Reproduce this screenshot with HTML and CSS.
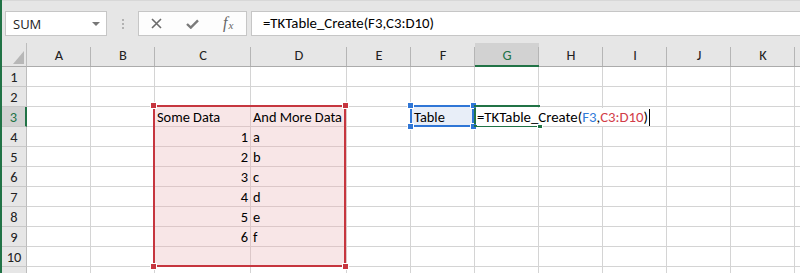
FILE: index.html
```html
<!DOCTYPE html>
<html lang="en">
<head>
    <meta charset="UTF-8">
    <title>TKTable_Create</title>
    <link rel="stylesheet" href="styles.css">
</head>
<body>
    <div class="app">
        <div class="formula-bar">
            <div class="name-box">
                <span>SUM</span>
                <span class="caret"></span>
            </div>
            <div class="grip"><i></i><i></i><i></i></div>
            <div class="fx-buttons">
                <span class="slot">
                    <svg width="11" height="11" viewBox="0 0 11 11"><path d="M1 1 L10 10 M10 1 L1 10" stroke="#6b6b6b" stroke-width="1.6" fill="none"/></svg>
                </span>
                <span class="slot">
                    <svg width="13" height="10" viewBox="0 0 13 10"><path d="M1 5 L4.8 8.6 L12 1.4" stroke="#7a7a7a" stroke-width="2.4" fill="none"/></svg>
                </span>
                <span class="slot fx">f<span>x</span></span>
            </div>
            <div class="formula-input">=TKTable_Create(F3,C3:D10)</div>
        </div>

        <div class="sheet">
            <div class="grid">
                <div class="corner">
                    <svg width="11" height="13" viewBox="0 0 11 13"><polygon points="11,0 11,13 0,13" fill="#b7b7b7"/></svg>
                </div>
                <div class="col">A</div><div class="col">B</div><div class="col">C</div><div class="col">D</div><div class="col">E</div><div class="col">F</div><div class="col sel">G</div><div class="col">H</div><div class="col">I</div><div class="col">J</div><div class="col">K</div><div class="col"></div>

                <div class="row">1</div><div></div><div></div><div></div><div></div><div></div><div></div><div></div><div></div><div></div><div></div><div></div><div></div>
                <div class="row">2</div><div></div><div></div><div></div><div></div><div></div><div></div><div></div><div></div><div></div><div></div><div></div><div></div>
                <div class="row sel">3</div><div></div><div></div><div class="pk">Some Data</div><div class="pk">And More Data</div><div></div><div class="bl">Table</div><div></div><div></div><div></div><div></div><div></div><div></div>
                <div class="row">4</div><div></div><div></div><div class="pk num">1</div><div class="pk">a</div><div></div><div></div><div></div><div></div><div></div><div></div><div></div><div></div>
                <div class="row">5</div><div></div><div></div><div class="pk num">2</div><div class="pk">b</div><div></div><div></div><div></div><div></div><div></div><div></div><div></div><div></div>
                <div class="row">6</div><div></div><div></div><div class="pk num">3</div><div class="pk">c</div><div></div><div></div><div></div><div></div><div></div><div></div><div></div><div></div>
                <div class="row">7</div><div></div><div></div><div class="pk num">4</div><div class="pk">d</div><div></div><div></div><div></div><div></div><div></div><div></div><div></div><div></div>
                <div class="row">8</div><div></div><div></div><div class="pk num">5</div><div class="pk">e</div><div></div><div></div><div></div><div></div><div></div><div></div><div></div><div></div>
                <div class="row">9</div><div></div><div></div><div class="pk num">6</div><div class="pk">f</div><div></div><div></div><div></div><div></div><div></div><div></div><div></div><div></div>
                <div class="row">10</div><div></div><div></div><div class="pk"></div><div class="pk"></div><div></div><div></div><div></div><div></div><div></div><div></div><div></div><div></div>
                <div class="row"></div><div></div><div></div><div></div><div></div><div></div><div></div><div></div><div></div><div></div><div></div><div></div><div></div>
            </div>

            <!-- reference highlights drawn over the cells -->
            <div class="ref ref-red"><i class="tl"></i><i class="tr"></i><i class="bl"></i><i class="br"></i></div>
            <div class="ref ref-blue"><i class="tl"></i><i class="tr"></i><i class="bl"></i><i class="br"></i></div>

            <div class="editor">
                <span class="edit-text">=TKTable_Create(<span class="t-blue">F3</span>,<span class="t-red">C3:D10</span>)<span class="cursor"></span></span>
                <i class="handle"></i>
            </div>
        </div>
    </div>
</body>
</html>
```

FILE: styles.css
```css
:root {
    --chrome: #e6e6e6;
    --chrome-line: #c6c6c6;
    --grid-line: #d4d4d4;
    --header-line: #ababab;
    --selected-header: #d2d2d2;
    --excel-green: #217346;
    --ref-red: #c6363f;
    --ref-red-fill: #f8e6e7;
    --ref-red-line: #dcc8c9;
    --ref-blue: #2f76d6;
    --ref-blue-fill: #e8eef8;
    --cell-font: "Carlito", "Lato", sans-serif;
    --cell-size: 14.4px;
    --formula-size: 14.8px;
}

* {
    box-sizing: border-box;
}

body {
    margin: 0;
    background: #fff;
    font-family: var(--cell-font);
    color: #000;
    overflow: hidden;
}

.app {
    height: 273px;
    border-left: 2px solid var(--excel-green);
    overflow: hidden;
}

/* formula bar */

.formula-bar {
    height: 43px;
    background: var(--chrome);
    border-top: 1px solid #d8d8d8;
    padding-top: 10px;
    display: flex;
    align-items: flex-start;
}

.name-box {
    margin-left: 3px;
    width: 102px;
    height: 25px;
    background: #fff;
    border: 1px solid var(--chrome-line);
    display: flex;
    align-items: center;
    justify-content: space-between;
    padding: 0 6px 0 7px;
    font-family: "Open Sans", sans-serif;
    font-size: 13px;
    color: #222;
}

.name-box .caret {
    width: 0;
    height: 0;
    border-left: 4px solid transparent;
    border-right: 4px solid transparent;
    border-top: 4px solid #777;
}

.grip {
    width: 31px;
    height: 25px;
    display: flex;
    flex-direction: column;
    align-items: center;
    justify-content: center;
    gap: 2px;
}

.grip i {
    width: 2px;
    height: 2px;
    background: #b2b2b2;
}

.fx-buttons {
    width: 109px;
    height: 25px;
    background: #fdfdfd;
    border: 1px solid var(--chrome-line);
    display: flex;
}

.fx-buttons .slot {
    width: 36px;
    display: flex;
    align-items: center;
    justify-content: center;
}

.fx-buttons .fx {
    font-family: "Liberation Serif", serif;
    font-style: italic;
    font-size: 16px;
    color: #666;
    padding-bottom: 2px;
}

.fx-buttons .fx span {
    font-size: 11px;
    margin-left: 1px;
    margin-top: 5px;
}

.formula-input {
    flex: 1;
    margin-left: 4px;
    height: 25px;
    background: #fff;
    border: 1px solid var(--chrome-line);
    border-right: none;
    padding-left: 11px;
    font-size: var(--formula-size);
    line-height: 23px;
    white-space: nowrap;
}

/* sheet */

.sheet {
    position: relative;
}

.grid {
    display: grid;
    grid-template-columns: 25px 64px 64px 96px 96px repeat(8, 64px);
    grid-template-rows: 24px repeat(11, 20px);
}

.grid > div {
    border-right: 1px solid var(--grid-line);
    border-bottom: 1px solid var(--grid-line);
    padding: 0 2px;
    font-size: var(--cell-size);
    line-height: 20px;
    white-space: nowrap;
    overflow: hidden;
}

.grid > .corner {
    background: var(--chrome);
    border-right: 1px solid #bdbdbd;
    border-bottom: 1px solid var(--header-line);
    display: flex;
    align-items: flex-end;
    justify-content: flex-end;
    padding: 0 2px 2px 0;
}

.grid > .col {
    position: relative;
    background: var(--chrome);
    border-right: none;
    border-bottom: 1px solid var(--header-line);
    text-align: center;
    line-height: 23px;
    padding-top: 1px;
    color: #222;
}

.grid > .col::after {
    content: "";
    position: absolute;
    right: 0;
    top: 4px;
    bottom: 0;
    width: 1px;
    background: #b5b5b5;
}

.grid > .col.sel {
    background: var(--selected-header);
    border-bottom: 2px solid var(--excel-green);
    color: var(--excel-green);
}

.grid > .row {
    background: var(--chrome);
    border-right: 1px solid #bdbdbd;
    border-bottom: 1px solid #c8c8c8;
    text-align: center;
    padding: 0;
    color: #222;
}

.grid > .row.sel {
    background: var(--selected-header);
    border-right: 2px solid var(--excel-green);
    color: var(--excel-green);
}

.grid > .pk {
    background: var(--ref-red-fill);
    border-color: var(--ref-red-line);
}

.grid > .bl {
    background: var(--ref-blue-fill);
    padding-left: 3px;
}

.grid > .num {
    text-align: right;
}

/* formula reference outlines */

.ref {
    position: absolute;
    top: 62px;
    border: 2px solid;
}

.ref i {
    position: absolute;
    width: 7px;
    height: 7px;
    border: 1px solid #fff;
}

.ref .tl { left: -5px; top: -5px; }
.ref .tr { right: -5px; top: -5px; }
.ref .bl { left: -5px; bottom: -5px; }
.ref .br { right: -5px; bottom: -5px; }

.ref-red {
    left: 151px;
    width: 193px;
    height: 162px;
    border-color: var(--ref-red);
}

.ref-red i {
    background: var(--ref-red);
}

.ref-blue {
    left: 408px;
    width: 64px;
    height: 22px;
    border-color: var(--ref-blue);
}

.ref-blue i {
    background: var(--ref-blue);
}

/* in-cell editor on G3 */

.editor {
    position: absolute;
    left: 472px;
    top: 62px;
    width: 66px;
    height: 22px;
    border-top: 2px solid var(--excel-green);
    border-bottom: 2px solid var(--excel-green);
    padding-left: 3px;
}

.editor::before {
    content: "";
    position: absolute;
    left: 0;
    top: 1px;
    width: 2px;
    height: 16px;
    background: var(--excel-green);
}

.edit-text {
    display: inline-flex;
    align-items: center;
    height: 18px;
    background: #fff;
    font-size: var(--formula-size);
    white-space: nowrap;
    padding-right: 2px;
}

.t-blue {
    color: #2f7ad8;
}

.t-red {
    color: #d23c48;
}

.cursor {
    width: 1px;
    height: 17px;
    margin-left: 1px;
    background: #000;
}

.editor .handle {
    position: absolute;
    right: -3px;
    bottom: -4px;
    width: 6px;
    height: 5px;
    background: var(--excel-green);
    border: 1px solid #fff;
}
```
